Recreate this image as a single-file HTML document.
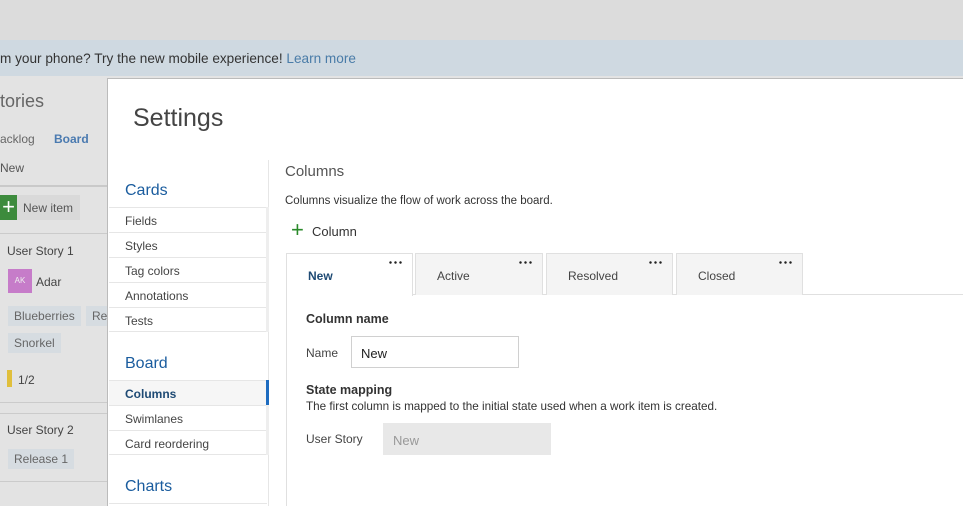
<!DOCTYPE html><html><head><style>
*{margin:0;padding:0;box-sizing:border-box}
body{width:963px;height:506px;overflow:hidden;background:#e3e3e3;font-family:"Liberation Sans",sans-serif;position:relative;color:#333}
.a{position:absolute;white-space:nowrap}
.nav{position:absolute;left:109px;width:158px;height:25px;border-top:1px solid #e6e6e6;background:#fff;font-size:12px;color:#444;padding:6px 0 0 16px}
.tab{position:absolute;top:253px;height:42px;border:1px solid #e0e0e0;border-bottom:none;background:#f4f4f4;font-size:12px;color:#444;padding:15px 0 0 21px}
.dots{position:absolute;right:10px;top:7px;width:14px;height:3px;background:radial-gradient(circle,#222 1.1px,transparent 1.4px) 0 0/5px 3px repeat-x}
.tag{position:absolute;background:#d6dce1;color:#666;font-size:12px;padding:3px 6px;height:20px}
</style></head><body>
<div class="a" style="left:0;top:0;width:963px;height:40px;background:#dcdcdc"></div>
<div class="a" style="left:0;top:40px;width:963px;height:36px;background:#cfd9e1"></div>
<div class="a" style="left:0;top:51px;font-size:13.6px;color:#333">m your phone? Try the new mobile experience! <span style="color:#4a7ca8">Learn more</span></div>
<div class="a" style="left:0;top:91px;font-size:18px;color:#666">tories</div>
<div class="a" style="left:0;top:132px;font-size:12px;color:#666">acklog</div>
<div class="a" style="left:54px;top:132px;font-size:12px;color:#4a7ab0;font-weight:bold">Board</div>
<div class="a" style="left:0;top:161px;font-size:12px;color:#555">New</div>
<div class="a" style="left:0;top:185px;width:108px;height:2px;background:#c9c9c9"></div>
<div class="a" style="left:0;top:195px;width:17px;height:25px;background:#3d8b3d;color:#fff;font-size:22px;line-height:24px;text-align:center">+</div>
<div class="a" style="left:17px;top:195px;width:63px;height:25px;background:#d9d9d9;font-size:12px;color:#555;padding:6px 0 0 6px">New item</div>
<div class="a" style="left:0;top:233px;width:108px;height:1px;background:#cbcbcb"></div>
<div class="a" style="left:7px;top:244px;font-size:12px;color:#444">User Story 1</div>
<div class="a" style="left:8px;top:269px;width:24px;height:24px;background:#c67cc9;color:#eee;font-size:8px;text-align:center;line-height:24px">AK</div>
<div class="a" style="left:36px;top:275px;font-size:12px;color:#444">Adar</div>
<div class="tag" style="left:8px;top:306px">Blueberries</div>
<div class="tag" style="left:86px;top:306px;width:22px;overflow:hidden">Rel</div>
<div class="tag" style="left:8px;top:333px">Snorkel</div>
<div class="a" style="left:7px;top:370px;width:5px;height:17px;background:#e0bf3c"></div>
<div class="a" style="left:18px;top:373px;font-size:12px;color:#444">1/2</div>
<div class="a" style="left:0;top:402px;width:108px;height:1px;background:#cbcbcb"></div>
<div class="a" style="left:0;top:413px;width:108px;height:1px;background:#cbcbcb"></div>
<div class="a" style="left:7px;top:423px;font-size:12px;color:#444">User Story 2</div>
<div class="tag" style="left:8px;top:449px">Release 1</div>
<div class="a" style="left:0;top:481px;width:108px;height:1px;background:#cbcbcb"></div>

<div class="a" style="left:107px;top:78px;width:856px;height:428px;background:#fff;border-left:1px solid #bbb;border-top:1px solid #bbb"></div>
<div class="a" style="left:133px;top:104px;font-size:25px;color:#444">Settings</div>
<div class="a" style="left:268px;top:160px;width:1px;height:346px;background:#e6e6e6"></div>
<div class="a" style="left:125px;top:182px;font-size:16px;color:#1a5c9e">Cards</div>
<div class="nav" style="top:207px">Fields</div>
<div class="nav" style="top:232px">Styles</div>
<div class="nav" style="top:257px">Tag colors</div>
<div class="nav" style="top:282px">Annotations</div>
<div class="nav" style="top:307px;border-bottom:1px solid #e6e6e6">Tests</div>
<div class="a" style="left:266px;top:207px;width:3px;height:125px;background:#eee"></div>
<div class="a" style="left:125px;top:355px;font-size:16px;color:#1a5c9e">Board</div>
<div class="nav" style="top:380px;background:#f6f6f6;font-weight:bold;color:#1e4a74">Columns</div>
<div class="nav" style="top:405px">Swimlanes</div>
<div class="nav" style="top:430px;border-bottom:1px solid #e6e6e6">Card reordering</div>
<div class="a" style="left:266px;top:380px;width:3px;height:25px;background:#1e6cc0"></div>
<div class="a" style="left:266px;top:405px;width:3px;height:50px;background:#eee"></div>
<div class="a" style="left:125px;top:478px;font-size:16px;color:#1a5c9e">Charts</div>
<div class="a" style="left:109px;top:503px;width:158px;height:1px;background:#e6e6e6"></div>

<div class="a" style="left:285px;top:163px;font-size:15px;color:#555">Columns</div>
<div class="a" style="left:285px;top:195px;font-size:11.5px;color:#333">Columns visualize the flow of work across the board.</div>
<div class="a" style="left:291px;top:219px;font-size:22px;color:#2a8a2a;line-height:22px">+</div>
<div class="a" style="left:312px;top:224px;font-size:13px;color:#333">Column</div>
<div class="a" style="left:286px;top:294px;width:677px;height:1px;background:#e0e0e0"></div>
<div class="a" style="left:286px;top:294px;width:1px;height:212px;background:#e0e0e0"></div>
<div class="tab" style="left:286px;width:127px;background:#fff;height:43px;font-weight:bold;color:#1e4a74">New<span class="dots"></span></div>
<div class="tab" style="left:415px;width:128px">Active<span class="dots"></span></div>
<div class="tab" style="left:546px;width:127px">Resolved<span class="dots"></span></div>
<div class="tab" style="left:676px;width:127px">Closed<span class="dots"></span></div>
<div class="a" style="left:306px;top:312px;font-size:12.5px;font-weight:bold;color:#333">Column name</div>
<div class="a" style="left:306px;top:346px;font-size:12px;color:#444">Name</div>
<div class="a" style="left:351px;top:336px;width:168px;height:32px;border:1px solid #d0d0d0;font-size:13px;color:#222;padding:9px 0 0 9px">New</div>
<div class="a" style="left:306px;top:383px;font-size:12.5px;font-weight:bold;color:#333">State mapping</div>
<div class="a" style="left:306px;top:400px;font-size:11.7px;color:#333">The first column is mapped to the initial state used when a work item is created.</div>
<div class="a" style="left:306px;top:432px;font-size:12px;color:#444">User Story</div>
<div class="a" style="left:383px;top:423px;width:168px;height:32px;background:#e8e8e8;font-size:13px;color:#999;padding:10px 0 0 10px">New</div>
</body></html>
